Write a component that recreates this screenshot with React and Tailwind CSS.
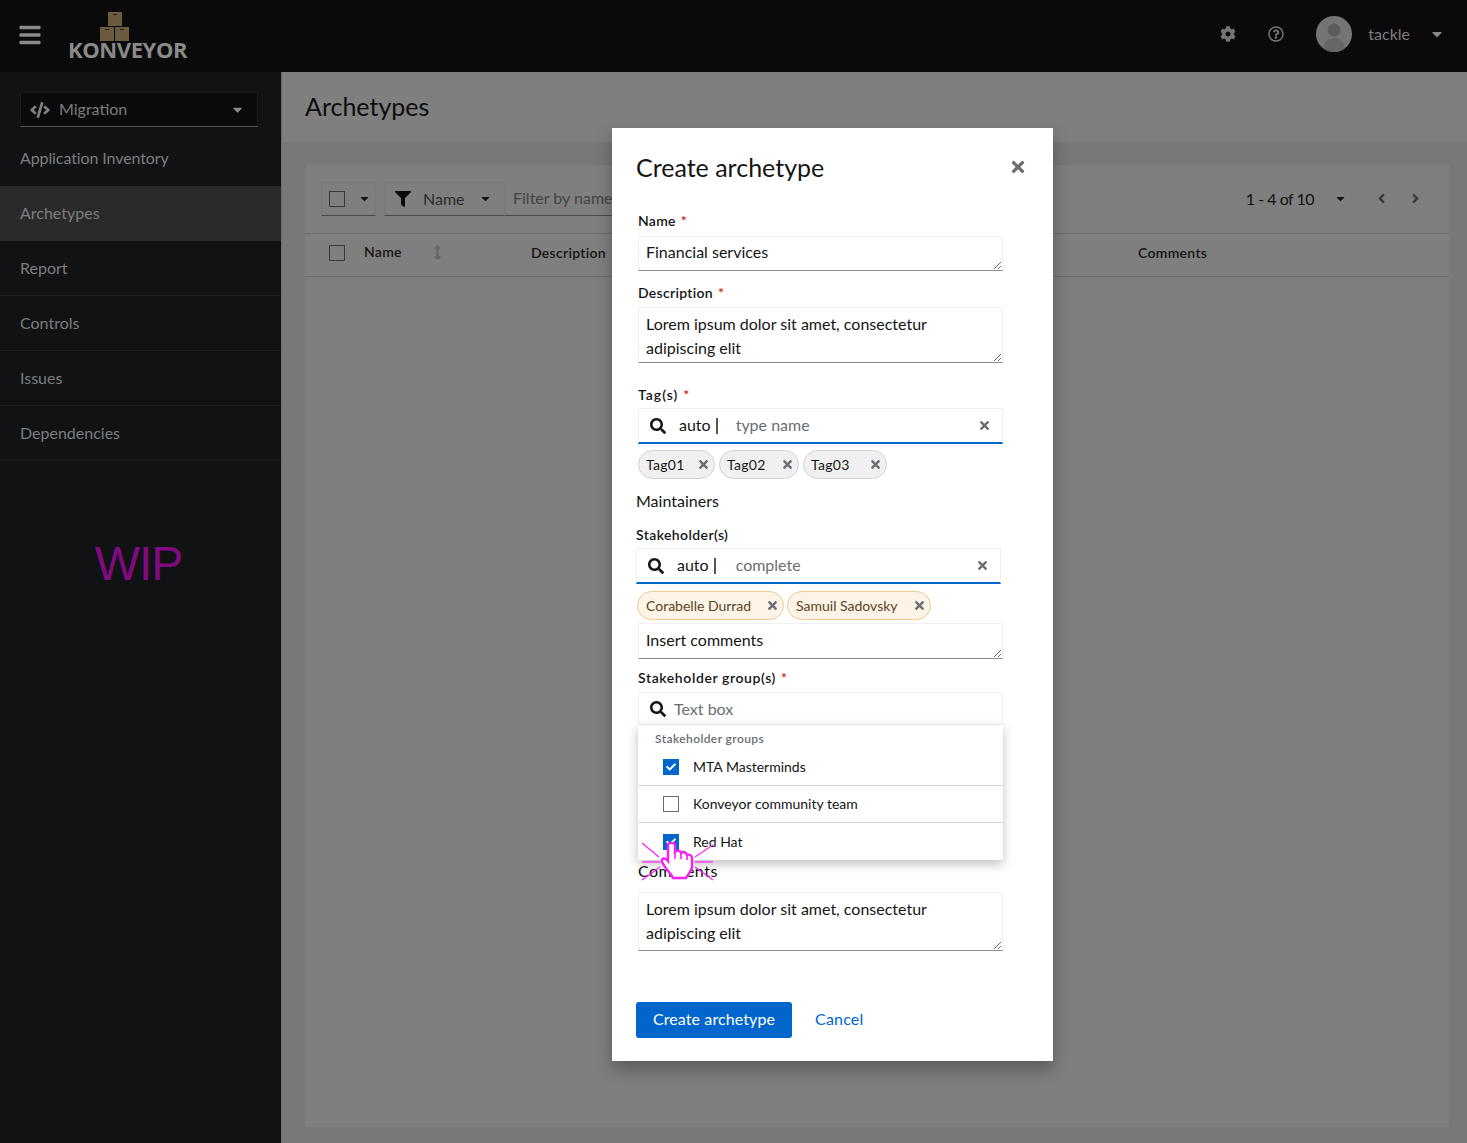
import React from "react";
import {
  FaBars,
  FaCaretDown,
  FaCode,
  FaCog,
  FaRegQuestionCircle,
  FaFilter,
  FaAngleLeft,
  FaAngleRight,
  FaArrowsAltV,
  FaSearch,
  FaTimes,
  FaCheck,
} from "react-icons/fa";

const navItems = ["Report", "Controls", "Issues", "Dependencies"];
const tags = [
  { label: "Tag01", width: "w-[77px]" },
  { label: "Tag02", width: "w-[80px]" },
  { label: "Tag03", width: "w-[84px]" },
];
const stakeholders = [
  { label: "Corabelle Durrad", width: "w-[147px]" },
  { label: "Samuil Sadovsky", width: "w-[144px]" },
];
const groups = [
  { name: "MTA Masterminds", checked: true },
  { name: "Konveyor community team", checked: false },
  { name: "Red Hat", checked: true },
];

function Logo() {
  return (
    <div className="flex flex-col w-[121px] ml-[27px] mt-[12px]">
      <svg width="30" height="29" viewBox="0 0 30 29" className="block ml-[32px]">
        <rect x="8" y="0" width="14" height="14" fill="#6b5c3f" />
        <rect x="0" y="15" width="14" height="14" fill="#6b5c3f" />
        <rect x="15" y="15" width="14" height="14" fill="#6b5c3f" />
        <rect x="13" y="2" width="4" height="1" fill="#1c1812" />
        <rect x="5" y="17" width="4" height="1" fill="#1c1812" />
        <rect x="20" y="17" width="4" height="1" fill="#1c1812" />
      </svg>
      <span className="font-['Open_Sans'] font-bold text-[22px] leading-[16px] tracking-[-0.4px] text-[#8a8a8a] whitespace-nowrap">
        KONVEYOR
      </span>
    </div>
  );
}

function Header() {
  return (
    <header className="h-[72px] bg-[#0a0a0a] flex items-start shrink-0 relative">
      <FaBars className="text-[#8a8a8a] w-[22px] h-[24px] ml-[19px] mt-[23px]" />
      <Logo />
      <div className="ml-auto h-full flex items-center pb-[4px] text-[#747474]">
        <FaCog size={16} />
        <FaRegQuestionCircle size={16} className="ml-[32px]" />
        <div className="ml-[32px] w-[36px] h-[36px] rounded-full bg-[#757575] overflow-hidden">
          <svg viewBox="0 0 36 36" className="w-full h-full">
            <circle cx="18" cy="14" r="6.5" fill="#5c5c5c" />
            <path d="M7 36 C7 26 11 22 18 22 C25 22 29 26 29 36 Z" fill="#666666" />
          </svg>
        </div>
        <span className="ml-[16px] text-[#7d7d7d]">tackle</span>
        <FaCaretDown size={16} className="ml-[19px] mr-[22px] text-[#8a8a8a]" />
      </div>
    </header>
  );
}

function Sidebar() {
  return (
    <aside className="w-[282px] shrink-0 bg-[#101214] border-r border-[#6a6a6a] text-[#7d7d7d] flex flex-col">
      <div className="mx-[20px] mt-[20px] h-[35px] w-[238px] bg-[#0a0a0a] border border-[#1a1a1a] border-b-[#555555] flex items-center pl-[9px] pr-[12px]">
        <FaCode size={20} className="text-[#808080]" />
        <span className="ml-[9px] mb-[2px]">Migration</span>
        <FaCaretDown size={15} className="ml-auto text-[#8a8a8a]" />
      </div>
      <div className="h-[59px] flex items-center px-[20px] pt-[2px] tracking-[-0.1px]">Application Inventory</div>
      <div className="h-[55px] flex items-center px-[20px] pb-[2px] bg-[#292a2c]">Archetypes</div>
      {navItems.map((item) => (
        <div key={item} className="h-[55px] flex items-center px-[20px] border-b border-[#1b1d20]">
          {item}
        </div>
      ))}
      <div className="mt-[73px] pr-[4px] text-center font-['Liberation_Sans'] text-[48px] leading-[60px] text-[#800a80] tracking-[-1px]">
        WIP
      </div>
    </aside>
  );
}

function Checkbox() {
  return <span className="block w-[16px] h-[16px] border border-[#3a3a3a] shrink-0" />;
}

function Background() {
  return (
    <main className="flex-1 bg-[#787878] flex flex-col">
      <div className="h-[70px] bg-[#7f7f7f] flex items-center pl-[23px] shrink-0">
        <h1 className="text-[25px] text-[#0d0d0d] mb-[1px]">Archetypes</h1>
      </div>
      <div className="mx-[23px] mt-[23px] mb-[16px] w-[1144px] flex-1 bg-[#7f7f7f] text-[#151515]">
        <div className="h-[69px] border-b border-[#6c6c6c] flex items-center pb-[1px] pl-[16px] pr-[26px]">
          <div className="h-[34px] w-[55px] border border-[#787878] border-b-[#4a4a4a] flex items-center pl-[7px]">
            <Checkbox />
            <FaCaretDown size={13} className="ml-[13px]" />
          </div>
          <div className="ml-[8px] h-[34px] w-[121px] border border-[#787878] border-b-[#4a4a4a] flex items-center pl-[10px]">
            <FaFilter size={16} className="text-[#0a0a0a]" />
            <span className="ml-[12px] text-[#2b2b2b]">Name</span>
            <FaCaretDown size={13} className="ml-[14px]" />
          </div>
          <div className="h-[34px] w-[200px] border-b border-[#4a4a4a] flex items-center pl-[8px] text-[#444444]">
            Filter by name
          </div>
          <span className="ml-auto text-[#101010] tracking-[-0.5px]">1 - 4 of 10</span>
          <FaCaretDown size={13} className="ml-[20px]" />
          <FaAngleLeft size={15} className="ml-[27px] text-[#3a3a3a]" />
          <FaAngleRight size={15} className="ml-[19px] text-[#3a3a3a]" />
        </div>
        <div className="h-[43px] border-b border-[#6c6c6c] flex items-center pb-[5px] pl-[24px] text-[14px] font-semibold tracking-[0.3px] text-[#151515]">
          <Checkbox />
          <span className="ml-[19px] w-[66px] mb-[2px]">Name</span>
          <FaArrowsAltV size={15} className="text-[#666666] mr-[86px]" />
          <span className="w-[607px]">Description</span>
          <span>Comments</span>
        </div>
      </div>
    </main>
  );
}

function Label({ children, required, className = "" }) {
  return (
    <div className={`text-[14px] leading-[20px] font-semibold text-[#151515] ${className}`}>
      {children}
      {required && <span className="text-[#c9190b] ml-[5px]">*</span>}
    </div>
  );
}

function TextArea({ value, className = "" }) {
  return (
    <textarea
      readOnly
      defaultValue={value}
      className={`block w-[365px] border border-[#f0f0f0] border-b-[#8a8d90] px-[7px] text-[16px] leading-[24px] text-[#151515] outline-none ${className}`}
    />
  );
}

function Chip({ label, width, orange }) {
  return (
    <span
      className={`h-[29px] rounded-full border flex items-center pr-[4px] text-[14px] ${width} ${
        orange
          ? "pl-[8px] bg-[#fdf3e7] border-[#f3c793] text-[#574522]"
          : "pl-[7px] tracking-[0.3px] bg-[#f0f0f0] border-[#d2d2d2] text-[#151515]"
      }`}
    >
      {label}
      <FaTimes size={13} className="text-[#6a6e73] ml-auto" />
    </span>
  );
}

function AutoComplete({ text, hint, hintOffset, className = "" }) {
  return (
    <div
      className={`h-[36px] w-[365px] border border-[#f0f0f0] border-b-2 border-b-[#06c] flex items-center pl-[11px] pr-[11px] ${className}`}
    >
      <FaSearch size={16} className="text-[#151515]" />
      <span className="ml-[13px] mb-[2px] text-[#151515]">{text}</span>
      <span className="ml-[5px] w-[2px] h-[16px] bg-[#555555]" />
      <span className={`mb-[2px] text-[#6a6e73] ${hintOffset}`}>{hint}</span>
      <FaTimes size={13} className="ml-auto text-[#6a6e73]" />
    </div>
  );
}

function GroupRow({ name, checked, last }) {
  return (
    <div className={`h-[37.5px] flex items-center pl-[25px] ${last ? "" : "border-b border-[#d2d2d2]"}`}>
      {checked ? (
        <span className="w-[16px] h-[16px] mt-[1px] bg-[#06c] flex items-center justify-center">
          <FaCheck size={10} className="text-white" />
        </span>
      ) : (
        <span className="w-[16px] h-[16px] mt-[1px] border border-[#6a6e73]" />
      )}
      <span className="ml-[14px] text-[14px] text-[#151515]">{name}</span>
    </div>
  );
}

// click marker drawn over the dropdown
function ClickCursor() {
  return (
    <svg width="74" height="42" viewBox="0 0 74 42" className="absolute z-20 left-[640px] top-[842px]">
      <g stroke="#f81ff8" strokeWidth="1.2" fill="none">
        <path d="M2 1 L19 15" />
        <path d="M2 20 L20 20" />
        <path d="M2 38 L20 25" />
        <path d="M73 3 L55 15" />
        <path d="M55 20 L73 20" />
        <path d="M55 25 L73 38" />
      </g>
      <path
        d="M28 3 C28 0 35 0 35 3 L35 10 C37 8 40 8 41 11 C43 9 46 10 47 13 C49 12 52 13 52 16 L52 24 C52 29 48 32 46 36 L33 36 C31 31 26 28 22 20 C21 16 25 15 28 19 Z"
        fill="#ffffff"
        stroke="#f81ff8"
        strokeWidth="2.4"
      />
      <path d="M35 10 L35 17 M41 11 L41 17 M47 13 L47 18" stroke="#f81ff8" strokeWidth="1.6" fill="none" />
    </svg>
  );
}

function Modal() {
  return (
    <div className="absolute left-[612px] top-[128px] w-[441px] h-[933px] bg-white pl-[24px] text-[16px] text-[#151515] shadow-[0_8px_16px_rgba(0,0,0,0.3)]">
      <div className="flex items-center pt-[23px] h-[55px]">
        <h2 className="text-[25px] leading-[32px] text-[#151515]">Create archetype</h2>
        <FaTimes size={18} className="ml-auto mr-[26px] text-[#6a6e73]" />
      </div>
      <div className="ml-[2px]">
        <Label required className="mt-[28px] tracking-[0.3px]">Name</Label>
        <TextArea value="Financial services" className="h-[35px] mt-[5px] pt-[3px]" />
        <Label required className="mt-[12px] tracking-[0.3px]">Description</Label>
        <TextArea
          value={"Lorem ipsum dolor sit amet, consectetur adipiscing elit"}
          className="h-[56px] mt-[4px] pt-[4px]"
        />
        <Label required className="mt-[22px] tracking-[1px]">Tag(s)</Label>
        <AutoComplete text="auto" hint="type name" hintOffset="ml-[18px]" className="mt-[3px]" />
        <div className="flex gap-[4px] mt-[6px]">
          {tags.map((t) => (
            <Chip key={t.label} label={t.label} width={t.width} />
          ))}
        </div>
      </div>
      <div className="mt-[10px] leading-[24px]">Maintainers</div>
      <Label className="mt-[12px] tracking-[0.4px]">Stakeholder(s)</Label>
      <AutoComplete text="auto" hint="complete" hintOffset="ml-[20px]" className="mt-[3px]" />
      <div className="flex gap-[3px] mt-[7px] ml-[1px]">
        {stakeholders.map((s) => (
          <Chip key={s.label} label={s.label} width={s.width} orange />
        ))}
      </div>
      <div className="ml-[2px]">
        <TextArea value="Insert comments" className="h-[36px] mt-[3px] pt-[4px]" />
        <Label required className="mt-[9px] tracking-[0.6px]">Stakeholder group(s)</Label>
        <div className="h-[33px] w-[365px] mt-[4px] border border-[#f0f0f0] flex items-center pl-[11px] text-[#6a6e73]">
          <FaSearch size={16} className="text-[#151515]" />
          <span className="ml-[8px]">Text box</span>
        </div>
        <div className="relative z-10 w-[365px] h-[135px] bg-white shadow-[0_4px_10px_rgba(0,0,0,0.25)]">
          <div className="h-[22px] pt-[6px] pl-[17px] text-[12px] leading-[16px] font-semibold tracking-[0.4px] text-[#6a6e73]">
            Stakeholder groups
          </div>
          <div className="pt-[1px]">
            {groups.map((g, i) => (
              <GroupRow key={g.name} name={g.name} checked={g.checked} last={i === groups.length - 1} />
            ))}
          </div>
        </div>
        <div className="-mt-[1px] leading-[24px] tracking-[0.5px] text-[#0d0d0d]">Comments</div>
        <TextArea
          value={"Lorem ipsum dolor sit amet, consectetur adipiscing elit"}
          className="h-[59px] mt-[9px] pt-[4px]"
        />
      </div>
      <div className="flex items-center mt-[51px]">
        <button className="h-[36px] w-[156px] pb-[2px] bg-[#06c] rounded-[3px] text-white tracking-[0.1px]">
          Create archetype
        </button>
        <span className="ml-[23px] mb-[2px] text-[#06c] tracking-[0.2px]">Cancel</span>
      </div>
    </div>
  );
}

export default function App() {
  return (
    <div className="relative w-[1467px] h-[1143px] overflow-hidden font-['Lato',sans-serif] text-[16px]">
      <div className="h-full flex flex-col">
        <Header />
        <div className="flex-1 flex">
          <Sidebar />
          <Background />
        </div>
      </div>
      <Modal />
      <ClickCursor />
    </div>
  );
}
